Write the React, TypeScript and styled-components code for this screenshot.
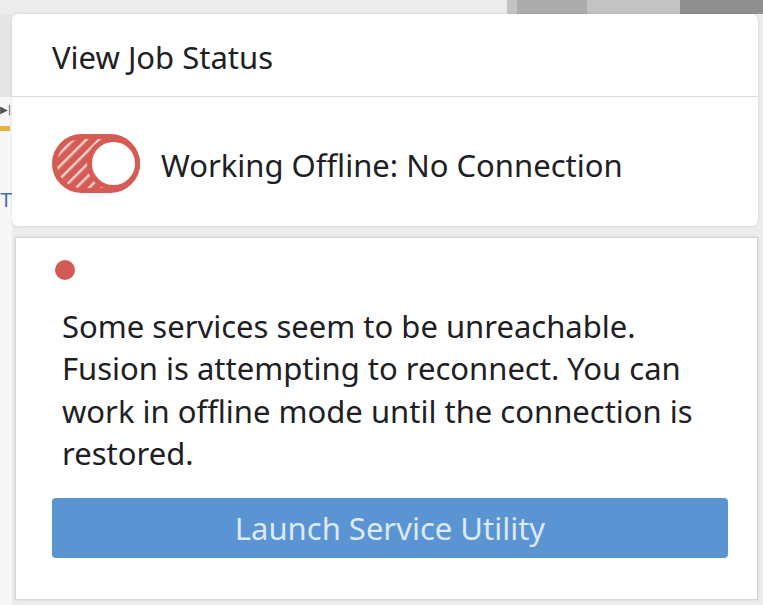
import styled, { createGlobalStyle } from "styled-components";

const GlobalStyle = createGlobalStyle`
  html, body { margin: 0; padding: 0; }
  body { background: #ececec; }
`;

const Page = styled.div`
  width: 763px;
  height: 605px;
  overflow: hidden;
  display: grid;
  grid-template-columns: 12px 1fr;
  grid-template-rows: 14px 1fr;
  background: #ececec;
  font-family: "Noto Sans", "Open Sans", sans-serif;
  color: #202024;
`;

const TopStrip = styled.div`
  grid-column: 1 / 3;
  display: flex;
  justify-content: flex-end;
`;

const StripBlock = styled.div<{ $w: number; $bg: string }>`
  width: ${(p) => p.$w}px;
  background: ${(p) => p.$bg};
`;

const LeftRail = styled.div`
  display: flex;
  flex-direction: column;
  background: linear-gradient(#e6e6e6 0 83px, #f7f7f7 83px);
  padding-top: 90px;
  gap: 10px;
`;

const RailArrow = styled.div`
  color: #555;
  font-family: "DejaVu Sans", sans-serif;
  font-size: 10px;
  line-height: 12px;
`;

const RailMark = styled.div`
  width: 10px;
  height: 5px;
  background: #e7b33a;
`;

const RailLetter = styled.div`
  margin-top: 48px;
  color: #3d6fb6;
  font-family: "Liberation Sans", sans-serif;
  font-size: 20px;
`;

const Popover = styled.div`
  display: flex;
  flex-direction: column;
  gap: 11px;
  padding-right: 5px;
`;

const MenuCard = styled.div`
  height: 212px;
  background: #fff;
  border-radius: 6px;
  box-shadow: 0 0 3px rgba(0, 0, 0, 0.12);
  display: flex;
  flex-direction: column;
`;

const MenuHeader = styled.div`
  height: 83px;
  display: flex;
  align-items: center;
  padding: 3px 40px 0;
  box-sizing: border-box;
  border-bottom: 1px solid #dcdcdc;
  font-size: 31px;
`;

const StatusRow = styled.div`
  flex: 1;
  display: flex;
  align-items: center;
  gap: 21px;
  padding: 3px 40px 0;
  font-size: 31px;
`;

const StatusLabel = styled.span`
  padding-top: 4px;
`;

const NoticeCard = styled.div`
  margin-left: 3px;
  height: 363px;
  box-sizing: border-box;
  background: #fff;
  border: 1px solid #d4d4d4;
  box-shadow: 0 0 3px rgba(0, 0, 0, 0.1);
  padding: 22px 29px 0 36px;
  display: flex;
  flex-direction: column;
`;

const StatusDot = styled.div`
  width: 20px;
  height: 20px;
  margin-left: 3px;
  border-radius: 50%;
  background: #d45a55;
`;

const Message = styled.p`
  margin: 25px 0 0 10px;
  font-size: 31px;
  line-height: 42.3px;
`;

const ServiceButton = styled.button`
  margin-top: 24px;
  height: 60px;
  border: none;
  border-radius: 4px;
  background: #5b94d2;
  color: #dce9f7;
  font-family: "Noto Sans", "Open Sans", sans-serif;
  font-size: 31px;
  cursor: pointer;
`;

function OfflineToggle() {
  return (
    <svg width="88" height="59" viewBox="0 0 88 59">
      <defs>
        <clipPath id="pill">
          <rect x="2.5" y="2.5" width="83" height="54" rx="27" />
        </clipPath>
        <pattern id="hatch" width="9" height="9" patternUnits="userSpaceOnUse" patternTransform="rotate(45)">
          <rect width="9" height="9" fill="#d65b55" />
          <rect width="2.5" height="9" fill="#f3cfcc" />
        </pattern>
      </defs>
      <g clipPath="url(#pill)">
        <rect x="0" y="0" width="62" height="59" fill="url(#hatch)" />
      </g>
      <rect x="2.5" y="2.5" width="83" height="54" rx="27" fill="none" stroke="#d65b55" strokeWidth="5" />
      <circle cx="61.5" cy="29.5" r="24" fill="#fff" stroke="#d65b55" strokeWidth="5" />
    </svg>
  );
}

export default function App() {
  return (
    <>
      <GlobalStyle />
      <Page>
        <TopStrip>
          <StripBlock $w={10} $bg="#c4c4c4" />
          <StripBlock $w={70} $bg="#acacac" />
          <StripBlock $w={93} $bg="#c3c3c3" />
          <StripBlock $w={83} $bg="#8f8f8f" />
        </TopStrip>
        <LeftRail>
          <RailArrow>▶|</RailArrow>
          <RailMark />
          <RailLetter>T</RailLetter>
        </LeftRail>
        <Popover>
          <MenuCard>
            <MenuHeader>View Job Status</MenuHeader>
            <StatusRow>
              <OfflineToggle />
              <StatusLabel>Working Offline: No Connection</StatusLabel>
            </StatusRow>
          </MenuCard>
          <NoticeCard>
            <StatusDot />
            <Message>
              Some services seem to be unreachable. Fusion is attempting to reconnect. You can
              work in offline mode until the connection is restored.
            </Message>
            <ServiceButton>Launch Service Utility</ServiceButton>
          </NoticeCard>
        </Popover>
      </Page>
    </>
  );
}
